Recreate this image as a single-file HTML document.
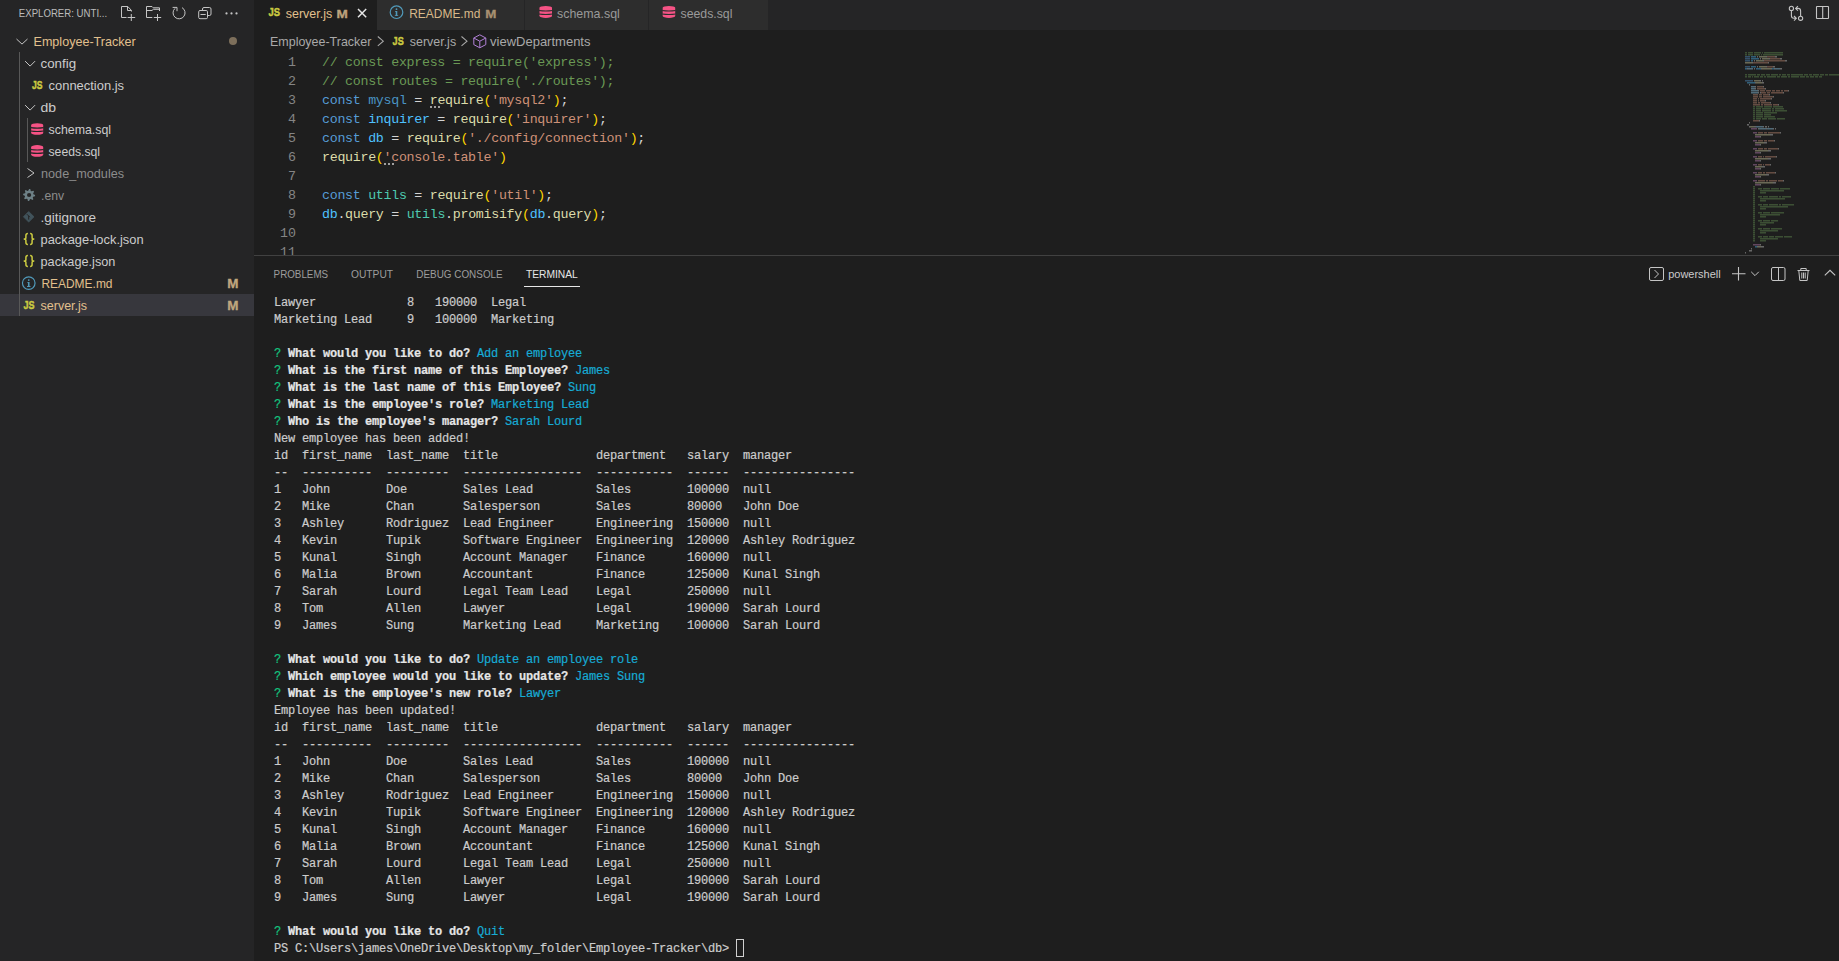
<!DOCTYPE html><html><head><meta charset="utf-8"><title>VS Code</title><style>
*{margin:0;padding:0;box-sizing:border-box}
html,body{width:1839px;height:961px;overflow:hidden;background:#1e1e1e}
body{position:relative;font-family:"Liberation Sans",sans-serif;color:#cccccc}
.abs{position:absolute}
#ov{position:absolute;left:0;top:0}
.code{font-family:"Liberation Mono",monospace;font-size:13.3px;letter-spacing:-0.29px;white-space:pre;line-height:19px;position:absolute}
.ln{width:42px;text-align:right;color:#858585;letter-spacing:0}
.term{position:absolute;left:274px;font-family:"Liberation Mono",monospace;font-size:12px;letter-spacing:-0.2px;line-height:17px;white-space:pre;color:#cccccc;-webkit-text-stroke:0.2px currentColor}
.g{color:#13c47f}.b{font-weight:bold;color:#e5e5e5}.c{color:#17abd4}
.cm{color:#6a9955}.kw{color:#569cd6}.vr{color:#4fc1ff}.fn{color:#dcdcaa}.st{color:#ce9178}.br{color:#ffd700}.pu{color:#d4d4d4}.vg{color:#4ec9b0}.vd{color:#4a94c4}
</style></head><body>
<div class="abs" style="left:0;top:0;width:254px;height:961px;background:#252526"></div>
<div class="abs" style="left:254px;top:0;width:1585px;height:30px;background:#252526"></div>
<div class="abs" style="left:254px;top:0;width:123px;height:30px;background:#1e1e1e"></div>
<div class="abs" style="left:377px;top:0;width:147px;height:30px;background:#2d2d2d"></div>
<div class="abs" style="left:525px;top:0;width:123px;height:30px;background:#2d2d2d"></div>
<div class="abs" style="left:649px;top:0;width:119px;height:30px;background:#2d2d2d"></div>
<div class="abs" style="left:0;top:294px;width:254px;height:22px;background:#37373d"></div>
<div class="abs" style="left:254px;top:255px;width:1585px;height:1px;background:#414141"></div>
<div class="abs" style="left:19px;top:52px;width:1px;height:264px;background:#585858"></div>
<div class="abs" style="left:27px;top:118px;width:1px;height:44px;background:#585858"></div>
<div class="abs" style="left:254px;top:52px;width:1585px;height:203px;overflow:hidden">
<div class="code ln" style="left:0;top:1px">1</div>
<div class="code" style="left:68px;top:1px"><span class="cm">// const express = require(&#x27;express&#x27;);</span></div>
<div class="code ln" style="left:0;top:20px">2</div>
<div class="code" style="left:68px;top:20px"><span class="cm">// const routes = require(&#x27;./routes&#x27;);</span></div>
<div class="code ln" style="left:0;top:39px">3</div>
<div class="code" style="left:68px;top:39px"><span class="kw">const</span><span class="pu"> </span><span class="vd">mysql</span><span class="pu"> = </span><span class="fn">require</span><span class="br">(</span><span class="st">&#x27;mysql2&#x27;</span><span class="br">)</span><span class="pu">;</span></div>
<div class="code ln" style="left:0;top:58px">4</div>
<div class="code" style="left:68px;top:58px"><span class="kw">const</span><span class="pu"> </span><span class="vr">inquirer</span><span class="pu"> = </span><span class="fn">require</span><span class="br">(</span><span class="st">&#x27;inquirer&#x27;</span><span class="br">)</span><span class="pu">;</span></div>
<div class="code ln" style="left:0;top:77px">5</div>
<div class="code" style="left:68px;top:77px"><span class="kw">const</span><span class="pu"> </span><span class="vr">db</span><span class="pu"> = </span><span class="fn">require</span><span class="br">(</span><span class="st">&#x27;./config/connection&#x27;</span><span class="br">)</span><span class="pu">;</span></div>
<div class="code ln" style="left:0;top:96px">6</div>
<div class="code" style="left:68px;top:96px"><span class="fn">require</span><span class="br">(</span><span class="st">&#x27;console.table&#x27;</span><span class="br">)</span></div>
<div class="code ln" style="left:0;top:115px">7</div>
<div class="code" style="left:68px;top:115px"></div>
<div class="code ln" style="left:0;top:134px">8</div>
<div class="code" style="left:68px;top:134px"><span class="kw">const</span><span class="pu"> </span><span class="vg">utils</span><span class="pu"> = </span><span class="fn">require</span><span class="br">(</span><span class="st">&#x27;util&#x27;</span><span class="br">)</span><span class="pu">;</span></div>
<div class="code ln" style="left:0;top:153px">9</div>
<div class="code" style="left:68px;top:153px"><span class="vr">db</span><span class="pu">.</span><span class="fn">query</span><span class="pu"> = </span><span class="vg">utils</span><span class="pu">.</span><span class="fn">promisify</span><span class="br">(</span><span class="vr">db</span><span class="pu">.</span><span class="fn">query</span><span class="br">)</span><span class="pu">;</span></div>
<div class="code ln" style="left:0;top:172px">10</div>
<div class="code" style="left:68px;top:172px"></div>
<div class="code ln" style="left:0;top:191px">11</div>
<div class="code" style="left:68px;top:191px"></div>
</div>
<div class="abs" style="left:524px;top:286px;width:56px;height:1px;background:#e7e7e7"></div>
<div class="term" style="top:295px">Lawyer             8   190000  Legal</div>
<div class="term" style="top:312px">Marketing Lead     9   100000  Marketing</div>
<div class="term" style="top:329px"></div>
<div class="term" style="top:346px"><span class="g">?</span> <span class="b">What would you like to do?</span> <span class="c">Add an employee</span></div>
<div class="term" style="top:363px"><span class="g">?</span> <span class="b">What is the first name of this Employee?</span> <span class="c">James</span></div>
<div class="term" style="top:380px"><span class="g">?</span> <span class="b">What is the last name of this Employee?</span> <span class="c">Sung</span></div>
<div class="term" style="top:397px"><span class="g">?</span> <span class="b">What is the employee&#x27;s role?</span> <span class="c">Marketing Lead</span></div>
<div class="term" style="top:414px"><span class="g">?</span> <span class="b">Who is the employee&#x27;s manager?</span> <span class="c">Sarah Lourd</span></div>
<div class="term" style="top:431px">New employee has been added!</div>
<div class="term" style="top:448px">id  first_name  last_name  title              department   salary  manager</div>
<div class="term" style="top:465px">--  ----------  ---------  -----------------  -----------  ------  ----------------</div>
<div class="term" style="top:482px">1   John        Doe        Sales Lead         Sales        100000  null</div>
<div class="term" style="top:499px">2   Mike        Chan       Salesperson        Sales        80000   John Doe</div>
<div class="term" style="top:516px">3   Ashley      Rodriguez  Lead Engineer      Engineering  150000  null</div>
<div class="term" style="top:533px">4   Kevin       Tupik      Software Engineer  Engineering  120000  Ashley Rodriguez</div>
<div class="term" style="top:550px">5   Kunal       Singh      Account Manager    Finance      160000  null</div>
<div class="term" style="top:567px">6   Malia       Brown      Accountant         Finance      125000  Kunal Singh</div>
<div class="term" style="top:584px">7   Sarah       Lourd      Legal Team Lead    Legal        250000  null</div>
<div class="term" style="top:601px">8   Tom         Allen      Lawyer             Legal        190000  Sarah Lourd</div>
<div class="term" style="top:618px">9   James       Sung       Marketing Lead     Marketing    100000  Sarah Lourd</div>
<div class="term" style="top:635px"></div>
<div class="term" style="top:652px"><span class="g">?</span> <span class="b">What would you like to do?</span> <span class="c">Update an employee role</span></div>
<div class="term" style="top:669px"><span class="g">?</span> <span class="b">Which employee would you like to update?</span> <span class="c">James Sung</span></div>
<div class="term" style="top:686px"><span class="g">?</span> <span class="b">What is the employee&#x27;s new role?</span> <span class="c">Lawyer</span></div>
<div class="term" style="top:703px">Employee has been updated!</div>
<div class="term" style="top:720px">id  first_name  last_name  title              department   salary  manager</div>
<div class="term" style="top:737px">--  ----------  ---------  -----------------  -----------  ------  ----------------</div>
<div class="term" style="top:754px">1   John        Doe        Sales Lead         Sales        100000  null</div>
<div class="term" style="top:771px">2   Mike        Chan       Salesperson        Sales        80000   John Doe</div>
<div class="term" style="top:788px">3   Ashley      Rodriguez  Lead Engineer      Engineering  150000  null</div>
<div class="term" style="top:805px">4   Kevin       Tupik      Software Engineer  Engineering  120000  Ashley Rodriguez</div>
<div class="term" style="top:822px">5   Kunal       Singh      Account Manager    Finance      160000  null</div>
<div class="term" style="top:839px">6   Malia       Brown      Accountant         Finance      125000  Kunal Singh</div>
<div class="term" style="top:856px">7   Sarah       Lourd      Legal Team Lead    Legal        250000  null</div>
<div class="term" style="top:873px">8   Tom         Allen      Lawyer             Legal        190000  Sarah Lourd</div>
<div class="term" style="top:890px">9   James       Sung       Lawyer             Legal        190000  Sarah Lourd</div>
<div class="term" style="top:907px"></div>
<div class="term" style="top:924px"><span class="g">?</span> <span class="b">What would you like to do?</span> <span class="c">Quit</span></div>
<div class="term" style="top:941px">PS C:\Users\james\OneDrive\Desktop\my_folder\Employee-Tracker\db&gt; </div>
<div class="abs" style="left:736px;top:939px;width:8px;height:18px;border:1px solid #d0d0d0"></div>
<svg id="ov" width="1839" height="961" viewBox="0 0 1839 961"><text x="18.80" y="17.3" font-family="Liberation Sans" font-size="11" font-weight="400" fill="#bbbbbb" textLength="88.30" lengthAdjust="spacingAndGlyphs">EXPLORER: UNTI...</text><g fill="none" stroke="#c5c5c5" stroke-width="1"><path d="M131.5 11.5 V10.5 L127.8 6.5 H121.5 V17.5 H126.5 M127.5 6.5 V10.5 H131.5"/><path d="M131.3 14 V21 M127.6 17.5 H135.2"/><path d="M146.5 17.5 V6.5 H152 L153.3 7.8 H159.5 V11 M146.5 10.5 H152 L153.3 9.3 H159.5 M146.5 17.5 H152.3"/><path d="M157.5 14 V21 M153.8 17.5 H161.2"/><path d="M182 7.6 A6 6 0 1 1 175 8.4"/><path d="M172.6 7.4 H177 V11.2"/><path d="M202.5 10 V9 Q202.5 7.5 204 7.5 H209.5 Q211 7.5 211 9 V14 Q211 15.5 209.5 15.5 H208"/><rect x="198.7" y="10.5" width="8.8" height="8.2" rx="1.3"/><path d="M200.5 14.5 H205.7"/></g><circle cx="226.5" cy="13.4" r="1.1" fill="#c5c5c5"/><circle cx="231.5" cy="13.4" r="1.1" fill="#c5c5c5"/><circle cx="236.5" cy="13.4" r="1.1" fill="#c5c5c5"/><text x="33.50" y="46" font-family="Liberation Sans" font-size="12.6" font-weight="400" fill="#e2c08d" textLength="102.30" lengthAdjust="spacingAndGlyphs">Employee-Tracker</text><text x="40.50" y="68" font-family="Liberation Sans" font-size="12.6" font-weight="400" fill="#cccccc" textLength="35.60" lengthAdjust="spacingAndGlyphs">config</text><text x="48.50" y="90" font-family="Liberation Sans" font-size="12.6" font-weight="400" fill="#cccccc" textLength="75.60" lengthAdjust="spacingAndGlyphs">connection.js</text><text x="40.50" y="112" font-family="Liberation Sans" font-size="12.6" font-weight="400" fill="#cccccc" textLength="15.60" lengthAdjust="spacingAndGlyphs">db</text><text x="48.50" y="134" font-family="Liberation Sans" font-size="12.6" font-weight="400" fill="#cccccc" textLength="62.60" lengthAdjust="spacingAndGlyphs">schema.sql</text><text x="48.50" y="156" font-family="Liberation Sans" font-size="12.6" font-weight="400" fill="#cccccc" textLength="51.60" lengthAdjust="spacingAndGlyphs">seeds.sql</text><text x="41.00" y="178" font-family="Liberation Sans" font-size="12.6" font-weight="400" fill="#8c8c8c" textLength="83.10" lengthAdjust="spacingAndGlyphs">node_modules</text><text x="41.00" y="200" font-family="Liberation Sans" font-size="12.6" font-weight="400" fill="#8c8c8c" textLength="23.10" lengthAdjust="spacingAndGlyphs">.env</text><text x="40.50" y="222" font-family="Liberation Sans" font-size="12.6" font-weight="400" fill="#cccccc" textLength="55.60" lengthAdjust="spacingAndGlyphs">.gitignore</text><text x="40.50" y="244" font-family="Liberation Sans" font-size="12.6" font-weight="400" fill="#cccccc" textLength="103.10" lengthAdjust="spacingAndGlyphs">package-lock.json</text><text x="40.50" y="266" font-family="Liberation Sans" font-size="12.6" font-weight="400" fill="#cccccc" textLength="74.90" lengthAdjust="spacingAndGlyphs">package.json</text><text x="41.40" y="288" font-family="Liberation Sans" font-size="12.6" font-weight="400" fill="#e2c08d" textLength="71.10" lengthAdjust="spacingAndGlyphs">README.md</text><text x="40.50" y="310" font-family="Liberation Sans" font-size="12.6" font-weight="400" fill="#e2c08d" textLength="46.60" lengthAdjust="spacingAndGlyphs">server.js</text><text x="227.20" y="288" font-family="Liberation Sans" font-size="12" font-weight="700" fill="#c0a67e" stroke="#c0a67e" stroke-width="0.3" textLength="11.20" lengthAdjust="spacingAndGlyphs">M</text><text x="227.20" y="310" font-family="Liberation Sans" font-size="12" font-weight="700" fill="#c0a67e" stroke="#c0a67e" stroke-width="0.3" textLength="11.20" lengthAdjust="spacingAndGlyphs">M</text><path d="M16.5 39.0 L22.0 44.1 L27.5 39.0" fill="none" stroke="#c5c5c5" stroke-width="1.0"/><path d="M25.1 61.1 L30.1 66.1 L35.1 61.1" fill="none" stroke="#c5c5c5" stroke-width="1.0"/><path d="M25.1 105.1 L30.1 110.1 L35.1 105.1" fill="none" stroke="#c5c5c5" stroke-width="1.0"/><text x="32" y="89" font-family="Liberation Sans" font-size="10.64" font-weight="700" fill="#cbcb41" stroke="#cbcb41" stroke-width="0.45" textLength="10.50" lengthAdjust="spacingAndGlyphs">JS</text><g fill="#f55385"><rect x="31.2" y="125.056" width="12" height="7.888"/><ellipse cx="37.2" cy="125.056" rx="6.0" ry="1.8559999999999999"/><ellipse cx="37.2" cy="132.94400000000002" rx="6.0" ry="1.8559999999999999"/></g><path d="M30.7 127.608 Q37.2 128.608 43.7 127.608 M30.7 130.972 Q37.2 131.972 43.7 130.972" fill="none" stroke="#252526" stroke-width="1.1"/><g fill="#f55385"><rect x="31.2" y="146.956" width="12" height="7.888"/><ellipse cx="37.2" cy="146.956" rx="6.0" ry="1.8559999999999999"/><ellipse cx="37.2" cy="154.844" rx="6.0" ry="1.8559999999999999"/></g><path d="M30.7 149.50799999999998 Q37.2 150.50799999999998 43.7 149.50799999999998 M30.7 152.87199999999999 Q37.2 153.87199999999999 43.7 152.87199999999999" fill="none" stroke="#252526" stroke-width="1.1"/><path d="M27.5 168.5 L34 173.0 L27.5 177.5" fill="none" stroke="#c5c5c5" stroke-width="1.0"/><polygon points="29.10,189.00 30.27,189.12 30.78,190.93 31.54,191.34 33.34,190.76 34.09,191.67 33.17,193.32 33.42,194.14 35.10,195.00 34.98,196.17 33.17,196.68 32.76,197.44 33.34,199.24 32.43,199.99 30.78,199.07 29.96,199.32 29.10,201.00 27.93,200.88 27.42,199.07 26.66,198.66 24.86,199.24 24.11,198.33 25.03,196.68 24.78,195.86 23.10,195.00 23.22,193.83 25.03,193.32 25.44,192.56 24.86,190.76 25.77,190.01 27.42,190.93 28.24,190.68" fill="#6d8086"/><circle cx="29.1" cy="195" r="2.1" fill="#252526"/><path d="M28.7 211.5 L34.0 216.8 L28.7 222.10000000000002 L23.4 216.8 Z" fill="#41535b" stroke="#41535b" stroke-width="0.8" stroke-linejoin="round"/><path d="M26.9 214.20000000000002 L29.9 217.20000000000002 M28.7 215.9 V219.60000000000002" stroke="#252526" stroke-width="1"/><path d="M27.9 233.5 Q25.9 233.5 25.9 235.5 V237.7 Q25.9 239.0 23.7 239.0 Q25.9 239.0 25.9 240.3 V242.5 Q25.9 244.5 27.9 244.5 M30.099999999999998 233.5 Q32.099999999999994 233.5 32.099999999999994 235.5 V237.7 Q32.099999999999994 239.0 34.3 239.0 Q32.099999999999994 239.0 32.099999999999994 240.3 V242.5 Q32.099999999999994 244.5 30.099999999999998 244.5" fill="none" stroke="#cbcb41" stroke-width="1.5"/><path d="M27.9 255.5 Q25.9 255.5 25.9 257.5 V259.7 Q25.9 261.0 23.7 261.0 Q25.9 261.0 25.9 262.3 V264.5 Q25.9 266.5 27.9 266.5 M30.099999999999998 255.5 Q32.099999999999994 255.5 32.099999999999994 257.5 V259.7 Q32.099999999999994 261.0 34.3 261.0 Q32.099999999999994 261.0 32.099999999999994 262.3 V264.5 Q32.099999999999994 266.5 30.099999999999998 266.5" fill="none" stroke="#cbcb41" stroke-width="1.5"/><circle cx="28.75" cy="283.1" r="6.3" fill="none" stroke="#519aba" stroke-width="1.2"/><circle cx="28.75" cy="280.1" r="0.9" fill="#519aba"/><path d="M27.25 281.90000000000003 H29.55 V286.1 H30.45 V287.0 H27.05 V286.1 H27.95 V282.70000000000005 H27.25Z" fill="#519aba"/><text x="23.6" y="309.1" font-family="Liberation Sans" font-size="10.77" font-weight="700" fill="#cbcb41" stroke="#cbcb41" stroke-width="0.45" textLength="11.00" lengthAdjust="spacingAndGlyphs">JS</text><circle cx="233" cy="41" r="4" fill="#7d6f5b"/><text x="268.5" y="16.3" font-family="Liberation Sans" font-size="11.04" font-weight="700" fill="#cbcb41" stroke="#cbcb41" stroke-width="0.45" textLength="11.50" lengthAdjust="spacingAndGlyphs">JS</text><text x="285.70" y="17.7" font-family="Liberation Sans" font-size="12.6" font-weight="400" fill="#e2c08d" textLength="46.50" lengthAdjust="spacingAndGlyphs">server.js</text><text x="336.50" y="17.7" font-family="Liberation Sans" font-size="11.5" font-weight="700" fill="#bca27c" stroke="#bca27c" stroke-width="0.35" textLength="11.30" lengthAdjust="spacingAndGlyphs">M</text><path d="M358 9 L366.2 17.2 M366.2 9 L358 17.2" stroke="#e6e6e6" stroke-width="1.5"/><circle cx="396.5" cy="12.2" r="6.3" fill="none" stroke="#519aba" stroke-width="1.2"/><circle cx="396.5" cy="9.2" r="0.9" fill="#519aba"/><path d="M395.0 11.0 H397.3 V15.2 H398.2 V16.099999999999998 H394.8 V15.2 H395.7 V11.799999999999999 H395.0Z" fill="#519aba"/><text x="409.20" y="17.9" font-family="Liberation Sans" font-size="12.6" font-weight="400" fill="#d8b98a" textLength="71.10" lengthAdjust="spacingAndGlyphs">README.md</text><text x="485.20" y="17.9" font-family="Liberation Sans" font-size="11.5" font-weight="700" fill="#a89070" stroke="#a89070" stroke-width="0.35" textLength="11.10" lengthAdjust="spacingAndGlyphs">M</text><g fill="#f55385"><rect x="539.5" y="7.82" width="12.5" height="8.16"/><ellipse cx="545.75" cy="7.82" rx="6.25" ry="1.92"/><ellipse cx="545.75" cy="15.979999999999999" rx="6.25" ry="1.92"/></g><path d="M539.0 10.46 Q545.75 11.46 552.5 10.46 M539.0 13.940000000000001 Q545.75 14.940000000000001 552.5 13.940000000000001" fill="none" stroke="#2d2d2d" stroke-width="1.1"/><text x="557.00" y="17.9" font-family="Liberation Sans" font-size="12.6" font-weight="400" fill="#9a9a9a" textLength="62.80" lengthAdjust="spacingAndGlyphs">schema.sql</text><g fill="#f55385"><rect x="662.7" y="7.82" width="12.5" height="8.16"/><ellipse cx="668.95" cy="7.82" rx="6.25" ry="1.92"/><ellipse cx="668.95" cy="15.979999999999999" rx="6.25" ry="1.92"/></g><path d="M662.2 10.46 Q668.95 11.46 675.7 10.46 M662.2 13.940000000000001 Q668.95 14.940000000000001 675.7 13.940000000000001" fill="none" stroke="#2d2d2d" stroke-width="1.1"/><text x="680.50" y="17.9" font-family="Liberation Sans" font-size="12.6" font-weight="400" fill="#9a9a9a" textLength="51.90" lengthAdjust="spacingAndGlyphs">seeds.sql</text><g fill="none" stroke="#c5c5c5" stroke-width="1.1"><circle cx="1791.4" cy="8.4" r="2.1"/><circle cx="1800.6" cy="18.3" r="2.1"/><path d="M1791.4 10.5 V15.8 Q1791.4 18.3 1793.9 18.3 H1796.6 M1794 16 L1796.3 18.3 L1794 20.6"/><path d="M1800.6 16.2 V10.9 Q1800.6 8.4 1798.1 8.4 H1795.4 M1797.9 6.1 L1795.6 8.4 L1797.9 10.7"/><rect x="1816.5" y="6.5" width="12" height="12" rx="0.5"/><path d="M1822.7 6.5 V18.5"/></g><text x="270.00" y="46" font-family="Liberation Sans" font-size="12.6" font-weight="400" fill="#a9a9a9" textLength="101.40" lengthAdjust="spacingAndGlyphs">Employee-Tracker</text><path d="M377.8 36.5 L383.3 41.15 L377.8 45.8" fill="none" stroke="#a9a9a9" stroke-width="1.05"/><text x="392.6" y="45" font-family="Liberation Sans" font-size="10.37" font-weight="700" fill="#cbcb41" stroke="#cbcb41" stroke-width="0.45" textLength="11.10" lengthAdjust="spacingAndGlyphs">JS</text><text x="409.80" y="46" font-family="Liberation Sans" font-size="12.6" font-weight="400" fill="#a9a9a9" textLength="46.30" lengthAdjust="spacingAndGlyphs">server.js</text><path d="M461.5 36.5 L467 41.15 L461.5 45.8" fill="none" stroke="#a9a9a9" stroke-width="1.05"/><path d="M479.8 34.8 L485.8 38 V44.6 L479.8 47.8 L473.8 44.6 V38 Z M473.8 38 L479.8 41.2 L485.8 38 M479.8 41.2 V47.8" fill="none" stroke="#b180d7" stroke-width="1" stroke-linejoin="round"/><text x="490.00" y="46" font-family="Liberation Sans" font-size="12.6" font-weight="400" fill="#a9a9a9" textLength="100.50" lengthAdjust="spacingAndGlyphs">viewDepartments</text><g fill="#a0a0a0"><rect x="430" y="106" width="2" height="2"/><rect x="434" y="106" width="2" height="2"/><rect x="438" y="106" width="2" height="2"/><rect x="384" y="163" width="2" height="2"/><rect x="388" y="163" width="2" height="2"/><rect x="392" y="163" width="2" height="2"/></g><text x="273.60" y="277.9" font-family="Liberation Sans" font-size="11" font-weight="400" fill="#9d9d9d" textLength="54.50" lengthAdjust="spacingAndGlyphs">PROBLEMS</text><text x="351.00" y="277.9" font-family="Liberation Sans" font-size="11" font-weight="400" fill="#9d9d9d" textLength="42.10" lengthAdjust="spacingAndGlyphs">OUTPUT</text><text x="416.30" y="277.9" font-family="Liberation Sans" font-size="11" font-weight="400" fill="#9d9d9d" textLength="86.40" lengthAdjust="spacingAndGlyphs">DEBUG CONSOLE</text><text x="525.90" y="277.9" font-family="Liberation Sans" font-size="11" font-weight="400" fill="#e7e7e7" textLength="51.90" lengthAdjust="spacingAndGlyphs">TERMINAL</text><g fill="none" stroke="#c5c5c5" stroke-width="1"><rect x="1649.5" y="267.5" width="14" height="13" rx="1.5"/><path d="M1654.5 270 L1658.5 274 L1654.5 278"/><path d="M1738.5 267 V280.5 M1732 273.8 H1745.5" stroke-width="1.1"/><path d="M1751.2 271.8 L1755 275.6 L1758.8 271.8"/><rect x="1771.5" y="267.5" width="13.5" height="13" rx="1.5"/><path d="M1778.5 267.5 V280.5"/><path d="M1797.5 270.5 H1809.5 M1800.8 270.5 V268.5 H1806.2 V270.5 M1798.8 270.5 L1799.8 280.5 H1807.2 L1808.2 270.5 M1801.8 272.5 V278.5 M1803.5 272.5 V278.5 M1805.2 272.5 V278.5"/><path d="M1824.8 275.3 L1830 270.3 L1835.2 275.3" stroke-width="1.1"/></g><text x="1668.20" y="277.5" font-family="Liberation Sans" font-size="11.5" font-weight="400" fill="#cccccc" textLength="52.50" lengthAdjust="spacingAndGlyphs">powershell</text><g opacity="0.4"><rect x="1745" y="52" width="2" height="1" fill="#6a9955"/><rect x="1745" y="53" width="2" height="1" fill="#6a9955" opacity="0.55"/><rect x="1748" y="52" width="5" height="1" fill="#6a9955"/><rect x="1748" y="53" width="5" height="1" fill="#6a9955" opacity="0.55"/><rect x="1754" y="52" width="7" height="1" fill="#6a9955"/><rect x="1754" y="53" width="7" height="1" fill="#6a9955" opacity="0.55"/><rect x="1762" y="52" width="1" height="1" fill="#6a9955"/><rect x="1762" y="53" width="1" height="1" fill="#6a9955" opacity="0.55"/><rect x="1764" y="52" width="19" height="1" fill="#6a9955"/><rect x="1764" y="53" width="19" height="1" fill="#6a9955" opacity="0.55"/><rect x="1745" y="54" width="2" height="1" fill="#6a9955"/><rect x="1745" y="55" width="2" height="1" fill="#6a9955" opacity="0.55"/><rect x="1748" y="54" width="5" height="1" fill="#6a9955"/><rect x="1748" y="55" width="5" height="1" fill="#6a9955" opacity="0.55"/><rect x="1754" y="54" width="6" height="1" fill="#6a9955"/><rect x="1754" y="55" width="6" height="1" fill="#6a9955" opacity="0.55"/><rect x="1761" y="54" width="1" height="1" fill="#6a9955"/><rect x="1761" y="55" width="1" height="1" fill="#6a9955" opacity="0.55"/><rect x="1763" y="54" width="20" height="1" fill="#6a9955"/><rect x="1763" y="55" width="20" height="1" fill="#6a9955" opacity="0.55"/><rect x="1745" y="56" width="5" height="1" fill="#569cd6"/><rect x="1745" y="57" width="5" height="1" fill="#569cd6" opacity="0.55"/><rect x="1751" y="56" width="5" height="1" fill="#4fc1ff"/><rect x="1751" y="57" width="5" height="1" fill="#4fc1ff" opacity="0.55"/><rect x="1757" y="56" width="1" height="1" fill="#d4d4d4"/><rect x="1757" y="57" width="1" height="1" fill="#d4d4d4" opacity="0.55"/><rect x="1759" y="56" width="7" height="1" fill="#dcdcaa"/><rect x="1759" y="57" width="7" height="1" fill="#dcdcaa" opacity="0.55"/><rect x="1766" y="56" width="1" height="1" fill="#d4d4d4"/><rect x="1766" y="57" width="1" height="1" fill="#d4d4d4" opacity="0.55"/><rect x="1767" y="56" width="8" height="1" fill="#ce9178"/><rect x="1767" y="57" width="8" height="1" fill="#ce9178" opacity="0.55"/><rect x="1775" y="56" width="1" height="1" fill="#d4d4d4"/><rect x="1775" y="57" width="1" height="1" fill="#d4d4d4" opacity="0.55"/><rect x="1776" y="56" width="1" height="1" fill="#d4d4d4"/><rect x="1776" y="57" width="1" height="1" fill="#d4d4d4" opacity="0.55"/><rect x="1745" y="58" width="5" height="1" fill="#569cd6"/><rect x="1745" y="59" width="5" height="1" fill="#569cd6" opacity="0.55"/><rect x="1751" y="58" width="8" height="1" fill="#4fc1ff"/><rect x="1751" y="59" width="8" height="1" fill="#4fc1ff" opacity="0.55"/><rect x="1760" y="58" width="1" height="1" fill="#d4d4d4"/><rect x="1760" y="59" width="1" height="1" fill="#d4d4d4" opacity="0.55"/><rect x="1762" y="58" width="7" height="1" fill="#dcdcaa"/><rect x="1762" y="59" width="7" height="1" fill="#dcdcaa" opacity="0.55"/><rect x="1769" y="58" width="1" height="1" fill="#d4d4d4"/><rect x="1769" y="59" width="1" height="1" fill="#d4d4d4" opacity="0.55"/><rect x="1770" y="58" width="10" height="1" fill="#ce9178"/><rect x="1770" y="59" width="10" height="1" fill="#ce9178" opacity="0.55"/><rect x="1780" y="58" width="1" height="1" fill="#d4d4d4"/><rect x="1780" y="59" width="1" height="1" fill="#d4d4d4" opacity="0.55"/><rect x="1781" y="58" width="1" height="1" fill="#d4d4d4"/><rect x="1781" y="59" width="1" height="1" fill="#d4d4d4" opacity="0.55"/><rect x="1745" y="60" width="5" height="1" fill="#569cd6"/><rect x="1745" y="61" width="5" height="1" fill="#569cd6" opacity="0.55"/><rect x="1751" y="60" width="2" height="1" fill="#4fc1ff"/><rect x="1751" y="61" width="2" height="1" fill="#4fc1ff" opacity="0.55"/><rect x="1754" y="60" width="1" height="1" fill="#d4d4d4"/><rect x="1754" y="61" width="1" height="1" fill="#d4d4d4" opacity="0.55"/><rect x="1756" y="60" width="7" height="1" fill="#dcdcaa"/><rect x="1756" y="61" width="7" height="1" fill="#dcdcaa" opacity="0.55"/><rect x="1763" y="60" width="1" height="1" fill="#d4d4d4"/><rect x="1763" y="61" width="1" height="1" fill="#d4d4d4" opacity="0.55"/><rect x="1764" y="60" width="21" height="1" fill="#ce9178"/><rect x="1764" y="61" width="21" height="1" fill="#ce9178" opacity="0.55"/><rect x="1785" y="60" width="1" height="1" fill="#d4d4d4"/><rect x="1785" y="61" width="1" height="1" fill="#d4d4d4" opacity="0.55"/><rect x="1786" y="60" width="1" height="1" fill="#d4d4d4"/><rect x="1786" y="61" width="1" height="1" fill="#d4d4d4" opacity="0.55"/><rect x="1745" y="62" width="7" height="1" fill="#dcdcaa"/><rect x="1745" y="63" width="7" height="1" fill="#dcdcaa" opacity="0.55"/><rect x="1752" y="62" width="1" height="1" fill="#d4d4d4"/><rect x="1752" y="63" width="1" height="1" fill="#d4d4d4" opacity="0.55"/><rect x="1753" y="62" width="15" height="1" fill="#ce9178"/><rect x="1753" y="63" width="15" height="1" fill="#ce9178" opacity="0.55"/><rect x="1768" y="62" width="1" height="1" fill="#d4d4d4"/><rect x="1768" y="63" width="1" height="1" fill="#d4d4d4" opacity="0.55"/><rect x="1745" y="66" width="5" height="1" fill="#569cd6"/><rect x="1745" y="67" width="5" height="1" fill="#569cd6" opacity="0.55"/><rect x="1751" y="66" width="5" height="1" fill="#4fc1ff"/><rect x="1751" y="67" width="5" height="1" fill="#4fc1ff" opacity="0.55"/><rect x="1757" y="66" width="1" height="1" fill="#d4d4d4"/><rect x="1757" y="67" width="1" height="1" fill="#d4d4d4" opacity="0.55"/><rect x="1759" y="66" width="7" height="1" fill="#dcdcaa"/><rect x="1759" y="67" width="7" height="1" fill="#dcdcaa" opacity="0.55"/><rect x="1766" y="66" width="1" height="1" fill="#d4d4d4"/><rect x="1766" y="67" width="1" height="1" fill="#d4d4d4" opacity="0.55"/><rect x="1767" y="66" width="6" height="1" fill="#ce9178"/><rect x="1767" y="67" width="6" height="1" fill="#ce9178" opacity="0.55"/><rect x="1773" y="66" width="1" height="1" fill="#d4d4d4"/><rect x="1773" y="67" width="1" height="1" fill="#d4d4d4" opacity="0.55"/><rect x="1774" y="66" width="1" height="1" fill="#d4d4d4"/><rect x="1774" y="67" width="1" height="1" fill="#d4d4d4" opacity="0.55"/><rect x="1745" y="68" width="2" height="1" fill="#4fc1ff"/><rect x="1745" y="69" width="2" height="1" fill="#4fc1ff" opacity="0.55"/><rect x="1747" y="68" width="1" height="1" fill="#d4d4d4"/><rect x="1747" y="69" width="1" height="1" fill="#d4d4d4" opacity="0.55"/><rect x="1748" y="68" width="5" height="1" fill="#9cdcfe"/><rect x="1748" y="69" width="5" height="1" fill="#9cdcfe" opacity="0.55"/><rect x="1754" y="68" width="1" height="1" fill="#d4d4d4"/><rect x="1754" y="69" width="1" height="1" fill="#d4d4d4" opacity="0.55"/><rect x="1756" y="68" width="5" height="1" fill="#4fc1ff"/><rect x="1756" y="69" width="5" height="1" fill="#4fc1ff" opacity="0.55"/><rect x="1761" y="68" width="1" height="1" fill="#d4d4d4"/><rect x="1761" y="69" width="1" height="1" fill="#d4d4d4" opacity="0.55"/><rect x="1762" y="68" width="9" height="1" fill="#dcdcaa"/><rect x="1762" y="69" width="9" height="1" fill="#dcdcaa" opacity="0.55"/><rect x="1771" y="68" width="1" height="1" fill="#d4d4d4"/><rect x="1771" y="69" width="1" height="1" fill="#d4d4d4" opacity="0.55"/><rect x="1772" y="68" width="2" height="1" fill="#4fc1ff"/><rect x="1772" y="69" width="2" height="1" fill="#4fc1ff" opacity="0.55"/><rect x="1774" y="68" width="1" height="1" fill="#d4d4d4"/><rect x="1774" y="69" width="1" height="1" fill="#d4d4d4" opacity="0.55"/><rect x="1775" y="68" width="5" height="1" fill="#9cdcfe"/><rect x="1775" y="69" width="5" height="1" fill="#9cdcfe" opacity="0.55"/><rect x="1780" y="68" width="1" height="1" fill="#d4d4d4"/><rect x="1780" y="69" width="1" height="1" fill="#d4d4d4" opacity="0.55"/><rect x="1781" y="68" width="1" height="1" fill="#d4d4d4"/><rect x="1781" y="69" width="1" height="1" fill="#d4d4d4" opacity="0.55"/><rect x="1745" y="74" width="2" height="1" fill="#6a9955"/><rect x="1745" y="75" width="2" height="1" fill="#6a9955" opacity="0.55"/><rect x="1748" y="74" width="8" height="1" fill="#6a9955"/><rect x="1748" y="75" width="8" height="1" fill="#6a9955" opacity="0.55"/><rect x="1757" y="74" width="3" height="1" fill="#6a9955"/><rect x="1757" y="75" width="3" height="1" fill="#6a9955" opacity="0.55"/><rect x="1761" y="74" width="4" height="1" fill="#6a9955"/><rect x="1761" y="75" width="4" height="1" fill="#6a9955" opacity="0.55"/><rect x="1766" y="74" width="4" height="1" fill="#6a9955"/><rect x="1766" y="75" width="4" height="1" fill="#6a9955" opacity="0.55"/><rect x="1771" y="74" width="7" height="1" fill="#6a9955"/><rect x="1771" y="75" width="7" height="1" fill="#6a9955" opacity="0.55"/><rect x="1779" y="74" width="2" height="1" fill="#6a9955"/><rect x="1779" y="75" width="2" height="1" fill="#6a9955" opacity="0.55"/><rect x="1782" y="74" width="4" height="1" fill="#6a9955"/><rect x="1782" y="75" width="4" height="1" fill="#6a9955" opacity="0.55"/><rect x="1787" y="74" width="3" height="1" fill="#6a9955"/><rect x="1787" y="75" width="3" height="1" fill="#6a9955" opacity="0.55"/><rect x="1791" y="74" width="12" height="1" fill="#6a9955"/><rect x="1791" y="75" width="12" height="1" fill="#6a9955" opacity="0.55"/><rect x="1804" y="74" width="4" height="1" fill="#6a9955"/><rect x="1804" y="75" width="4" height="1" fill="#6a9955" opacity="0.55"/><rect x="1809" y="74" width="3" height="1" fill="#6a9955"/><rect x="1809" y="75" width="3" height="1" fill="#6a9955" opacity="0.55"/><rect x="1813" y="74" width="6" height="1" fill="#6a9955"/><rect x="1813" y="75" width="6" height="1" fill="#6a9955" opacity="0.55"/><rect x="1820" y="74" width="4" height="1" fill="#6a9955"/><rect x="1820" y="75" width="4" height="1" fill="#6a9955" opacity="0.55"/><rect x="1825" y="74" width="3" height="1" fill="#6a9955"/><rect x="1825" y="75" width="3" height="1" fill="#6a9955" opacity="0.55"/><rect x="1829" y="74" width="10" height="1" fill="#6a9955"/><rect x="1829" y="75" width="10" height="1" fill="#6a9955" opacity="0.55"/><rect x="1745" y="76" width="2" height="1" fill="#6a9955"/><rect x="1745" y="77" width="2" height="1" fill="#6a9955" opacity="0.55"/><rect x="1748" y="76" width="3" height="1" fill="#6a9955"/><rect x="1748" y="77" width="3" height="1" fill="#6a9955" opacity="0.55"/><rect x="1752" y="76" width="1" height="1" fill="#6a9955"/><rect x="1752" y="77" width="1" height="1" fill="#6a9955" opacity="0.55"/><rect x="1754" y="76" width="5" height="1" fill="#6a9955"/><rect x="1754" y="77" width="5" height="1" fill="#6a9955" opacity="0.55"/><rect x="1760" y="76" width="3" height="1" fill="#6a9955"/><rect x="1760" y="77" width="3" height="1" fill="#6a9955" opacity="0.55"/><rect x="1764" y="76" width="2" height="1" fill="#6a9955"/><rect x="1764" y="77" width="2" height="1" fill="#6a9955" opacity="0.55"/><rect x="1767" y="76" width="9" height="1" fill="#6a9955"/><rect x="1767" y="77" width="9" height="1" fill="#6a9955" opacity="0.55"/><rect x="1777" y="76" width="3" height="1" fill="#6a9955"/><rect x="1777" y="77" width="3" height="1" fill="#6a9955" opacity="0.55"/><rect x="1781" y="76" width="6" height="1" fill="#6a9955"/><rect x="1781" y="77" width="6" height="1" fill="#6a9955" opacity="0.55"/><rect x="1788" y="76" width="2" height="1" fill="#6a9955"/><rect x="1788" y="77" width="2" height="1" fill="#6a9955" opacity="0.55"/><rect x="1791" y="76" width="8" height="1" fill="#6a9955"/><rect x="1791" y="77" width="8" height="1" fill="#6a9955" opacity="0.55"/><rect x="1800" y="76" width="5" height="1" fill="#6a9955"/><rect x="1800" y="77" width="5" height="1" fill="#6a9955" opacity="0.55"/><rect x="1806" y="76" width="3" height="1" fill="#6a9955"/><rect x="1806" y="77" width="3" height="1" fill="#6a9955" opacity="0.55"/><rect x="1810" y="76" width="4" height="1" fill="#6a9955"/><rect x="1810" y="77" width="4" height="1" fill="#6a9955" opacity="0.55"/><rect x="1815" y="76" width="3" height="1" fill="#6a9955"/><rect x="1815" y="77" width="3" height="1" fill="#6a9955" opacity="0.55"/><rect x="1819" y="76" width="3" height="1" fill="#6a9955"/><rect x="1819" y="77" width="3" height="1" fill="#6a9955" opacity="0.55"/><rect x="1745" y="80" width="8" height="1" fill="#569cd6"/><rect x="1745" y="81" width="8" height="1" fill="#569cd6" opacity="0.55"/><rect x="1754" y="80" width="5" height="1" fill="#dcdcaa"/><rect x="1754" y="81" width="5" height="1" fill="#dcdcaa" opacity="0.55"/><rect x="1759" y="80" width="1" height="1" fill="#d4d4d4"/><rect x="1759" y="81" width="1" height="1" fill="#d4d4d4" opacity="0.55"/><rect x="1760" y="80" width="1" height="1" fill="#d4d4d4"/><rect x="1760" y="81" width="1" height="1" fill="#d4d4d4" opacity="0.55"/><rect x="1762" y="80" width="1" height="1" fill="#d4d4d4"/><rect x="1762" y="81" width="1" height="1" fill="#d4d4d4" opacity="0.55"/><rect x="1747" y="82" width="8" height="1" fill="#4fc1ff"/><rect x="1747" y="83" width="8" height="1" fill="#4fc1ff" opacity="0.55"/><rect x="1755" y="82" width="1" height="1" fill="#d4d4d4"/><rect x="1755" y="83" width="1" height="1" fill="#d4d4d4" opacity="0.55"/><rect x="1756" y="82" width="6" height="1" fill="#dcdcaa"/><rect x="1756" y="83" width="6" height="1" fill="#dcdcaa" opacity="0.55"/><rect x="1762" y="82" width="1" height="1" fill="#d4d4d4"/><rect x="1762" y="83" width="1" height="1" fill="#d4d4d4" opacity="0.55"/><rect x="1763" y="82" width="1" height="1" fill="#d4d4d4"/><rect x="1763" y="83" width="1" height="1" fill="#d4d4d4" opacity="0.55"/><rect x="1749" y="84" width="1" height="1" fill="#d4d4d4"/><rect x="1749" y="85" width="1" height="1" fill="#d4d4d4" opacity="0.55"/><rect x="1751" y="86" width="4" height="1" fill="#9cdcfe"/><rect x="1751" y="87" width="4" height="1" fill="#9cdcfe" opacity="0.55"/><rect x="1755" y="86" width="1" height="1" fill="#d4d4d4"/><rect x="1755" y="87" width="1" height="1" fill="#d4d4d4" opacity="0.55"/><rect x="1757" y="86" width="6" height="1" fill="#ce9178"/><rect x="1757" y="87" width="6" height="1" fill="#ce9178" opacity="0.55"/><rect x="1763" y="86" width="1" height="1" fill="#d4d4d4"/><rect x="1763" y="87" width="1" height="1" fill="#d4d4d4" opacity="0.55"/><rect x="1751" y="88" width="4" height="1" fill="#9cdcfe"/><rect x="1751" y="89" width="4" height="1" fill="#9cdcfe" opacity="0.55"/><rect x="1755" y="88" width="1" height="1" fill="#d4d4d4"/><rect x="1755" y="89" width="1" height="1" fill="#d4d4d4" opacity="0.55"/><rect x="1757" y="88" width="8" height="1" fill="#ce9178"/><rect x="1757" y="89" width="8" height="1" fill="#ce9178" opacity="0.55"/><rect x="1765" y="88" width="1" height="1" fill="#d4d4d4"/><rect x="1765" y="89" width="1" height="1" fill="#d4d4d4" opacity="0.55"/><rect x="1751" y="90" width="7" height="1" fill="#9cdcfe"/><rect x="1751" y="91" width="7" height="1" fill="#9cdcfe" opacity="0.55"/><rect x="1758" y="90" width="1" height="1" fill="#d4d4d4"/><rect x="1758" y="91" width="1" height="1" fill="#d4d4d4" opacity="0.55"/><rect x="1760" y="90" width="5" height="1" fill="#ce9178"/><rect x="1760" y="91" width="5" height="1" fill="#ce9178" opacity="0.55"/><rect x="1766" y="90" width="5" height="1" fill="#ce9178"/><rect x="1766" y="91" width="5" height="1" fill="#ce9178" opacity="0.55"/><rect x="1772" y="90" width="3" height="1" fill="#ce9178"/><rect x="1772" y="91" width="3" height="1" fill="#ce9178" opacity="0.55"/><rect x="1776" y="90" width="4" height="1" fill="#ce9178"/><rect x="1776" y="91" width="4" height="1" fill="#ce9178" opacity="0.55"/><rect x="1781" y="90" width="2" height="1" fill="#ce9178"/><rect x="1781" y="91" width="2" height="1" fill="#ce9178" opacity="0.55"/><rect x="1784" y="90" width="4" height="1" fill="#ce9178"/><rect x="1784" y="91" width="4" height="1" fill="#ce9178" opacity="0.55"/><rect x="1788" y="90" width="1" height="1" fill="#d4d4d4"/><rect x="1788" y="91" width="1" height="1" fill="#d4d4d4" opacity="0.55"/><rect x="1751" y="92" width="7" height="1" fill="#9cdcfe"/><rect x="1751" y="93" width="7" height="1" fill="#9cdcfe" opacity="0.55"/><rect x="1758" y="92" width="1" height="1" fill="#d4d4d4"/><rect x="1758" y="93" width="1" height="1" fill="#d4d4d4" opacity="0.55"/><rect x="1760" y="92" width="1" height="1" fill="#d4d4d4"/><rect x="1760" y="93" width="1" height="1" fill="#d4d4d4" opacity="0.55"/><rect x="1761" y="92" width="5" height="1" fill="#ce9178"/><rect x="1761" y="93" width="5" height="1" fill="#ce9178" opacity="0.55"/><rect x="1767" y="92" width="3" height="1" fill="#ce9178"/><rect x="1767" y="93" width="3" height="1" fill="#ce9178" opacity="0.55"/><rect x="1771" y="92" width="12" height="1" fill="#ce9178"/><rect x="1771" y="93" width="12" height="1" fill="#ce9178" opacity="0.55"/><rect x="1783" y="92" width="1" height="1" fill="#d4d4d4"/><rect x="1783" y="93" width="1" height="1" fill="#d4d4d4" opacity="0.55"/><rect x="1753" y="94" width="5" height="1" fill="#ce9178"/><rect x="1753" y="95" width="5" height="1" fill="#ce9178" opacity="0.55"/><rect x="1759" y="94" width="3" height="1" fill="#ce9178"/><rect x="1759" y="95" width="3" height="1" fill="#ce9178" opacity="0.55"/><rect x="1763" y="94" width="6" height="1" fill="#ce9178"/><rect x="1763" y="95" width="6" height="1" fill="#ce9178" opacity="0.55"/><rect x="1769" y="94" width="1" height="1" fill="#d4d4d4"/><rect x="1769" y="95" width="1" height="1" fill="#d4d4d4" opacity="0.55"/><rect x="1753" y="96" width="5" height="1" fill="#ce9178"/><rect x="1753" y="97" width="5" height="1" fill="#ce9178" opacity="0.55"/><rect x="1759" y="96" width="3" height="1" fill="#ce9178"/><rect x="1759" y="97" width="3" height="1" fill="#ce9178" opacity="0.55"/><rect x="1763" y="96" width="10" height="1" fill="#ce9178"/><rect x="1763" y="97" width="10" height="1" fill="#ce9178" opacity="0.55"/><rect x="1773" y="96" width="1" height="1" fill="#d4d4d4"/><rect x="1773" y="97" width="1" height="1" fill="#d4d4d4" opacity="0.55"/><rect x="1753" y="98" width="4" height="1" fill="#ce9178"/><rect x="1753" y="99" width="4" height="1" fill="#ce9178" opacity="0.55"/><rect x="1758" y="98" width="1" height="1" fill="#ce9178"/><rect x="1758" y="99" width="1" height="1" fill="#ce9178" opacity="0.55"/><rect x="1760" y="98" width="11" height="1" fill="#ce9178"/><rect x="1760" y="99" width="11" height="1" fill="#ce9178" opacity="0.55"/><rect x="1771" y="98" width="1" height="1" fill="#d4d4d4"/><rect x="1771" y="99" width="1" height="1" fill="#d4d4d4" opacity="0.55"/><rect x="1753" y="100" width="4" height="1" fill="#ce9178"/><rect x="1753" y="101" width="4" height="1" fill="#ce9178" opacity="0.55"/><rect x="1758" y="100" width="1" height="1" fill="#ce9178"/><rect x="1758" y="101" width="1" height="1" fill="#ce9178" opacity="0.55"/><rect x="1760" y="100" width="5" height="1" fill="#ce9178"/><rect x="1760" y="101" width="5" height="1" fill="#ce9178" opacity="0.55"/><rect x="1765" y="100" width="1" height="1" fill="#d4d4d4"/><rect x="1765" y="101" width="1" height="1" fill="#d4d4d4" opacity="0.55"/><rect x="1753" y="102" width="4" height="1" fill="#ce9178"/><rect x="1753" y="103" width="4" height="1" fill="#ce9178" opacity="0.55"/><rect x="1758" y="102" width="2" height="1" fill="#ce9178"/><rect x="1758" y="103" width="2" height="1" fill="#ce9178" opacity="0.55"/><rect x="1761" y="102" width="9" height="1" fill="#ce9178"/><rect x="1761" y="103" width="9" height="1" fill="#ce9178" opacity="0.55"/><rect x="1770" y="102" width="1" height="1" fill="#d4d4d4"/><rect x="1770" y="103" width="1" height="1" fill="#d4d4d4" opacity="0.55"/><rect x="1753" y="104" width="7" height="1" fill="#ce9178"/><rect x="1753" y="105" width="7" height="1" fill="#ce9178" opacity="0.55"/><rect x="1761" y="104" width="2" height="1" fill="#ce9178"/><rect x="1761" y="105" width="2" height="1" fill="#ce9178" opacity="0.55"/><rect x="1764" y="104" width="8" height="1" fill="#ce9178"/><rect x="1764" y="105" width="8" height="1" fill="#ce9178" opacity="0.55"/><rect x="1773" y="104" width="5" height="1" fill="#ce9178"/><rect x="1773" y="105" width="5" height="1" fill="#ce9178" opacity="0.55"/><rect x="1778" y="104" width="1" height="1" fill="#d4d4d4"/><rect x="1778" y="105" width="1" height="1" fill="#d4d4d4" opacity="0.55"/><rect x="1753" y="106" width="2" height="1" fill="#6a9955"/><rect x="1753" y="107" width="2" height="1" fill="#6a9955" opacity="0.55"/><rect x="1756" y="106" width="7" height="1" fill="#6a9955"/><rect x="1756" y="107" width="7" height="1" fill="#6a9955" opacity="0.55"/><rect x="1764" y="106" width="8" height="1" fill="#6a9955"/><rect x="1764" y="107" width="8" height="1" fill="#6a9955" opacity="0.55"/><rect x="1773" y="106" width="10" height="1" fill="#6a9955"/><rect x="1773" y="107" width="10" height="1" fill="#6a9955" opacity="0.55"/><rect x="1753" y="108" width="2" height="1" fill="#6a9955"/><rect x="1753" y="109" width="2" height="1" fill="#6a9955" opacity="0.55"/><rect x="1756" y="108" width="5" height="1" fill="#6a9955"/><rect x="1756" y="109" width="5" height="1" fill="#6a9955" opacity="0.55"/><rect x="1762" y="108" width="9" height="1" fill="#6a9955"/><rect x="1762" y="109" width="9" height="1" fill="#6a9955" opacity="0.55"/><rect x="1772" y="108" width="2" height="1" fill="#6a9955"/><rect x="1772" y="109" width="2" height="1" fill="#6a9955" opacity="0.55"/><rect x="1775" y="108" width="9" height="1" fill="#6a9955"/><rect x="1775" y="109" width="9" height="1" fill="#6a9955" opacity="0.55"/><rect x="1753" y="110" width="2" height="1" fill="#6a9955"/><rect x="1753" y="111" width="2" height="1" fill="#6a9955" opacity="0.55"/><rect x="1756" y="110" width="5" height="1" fill="#6a9955"/><rect x="1756" y="111" width="5" height="1" fill="#6a9955" opacity="0.55"/><rect x="1762" y="110" width="9" height="1" fill="#6a9955"/><rect x="1762" y="111" width="9" height="1" fill="#6a9955" opacity="0.55"/><rect x="1772" y="110" width="2" height="1" fill="#6a9955"/><rect x="1772" y="111" width="2" height="1" fill="#6a9955" opacity="0.55"/><rect x="1775" y="110" width="12" height="1" fill="#6a9955"/><rect x="1775" y="111" width="12" height="1" fill="#6a9955" opacity="0.55"/><rect x="1753" y="112" width="2" height="1" fill="#6a9955"/><rect x="1753" y="113" width="2" height="1" fill="#6a9955" opacity="0.55"/><rect x="1756" y="112" width="7" height="1" fill="#6a9955"/><rect x="1756" y="113" width="7" height="1" fill="#6a9955" opacity="0.55"/><rect x="1764" y="112" width="13" height="1" fill="#6a9955"/><rect x="1764" y="113" width="13" height="1" fill="#6a9955" opacity="0.55"/><rect x="1753" y="114" width="2" height="1" fill="#6a9955"/><rect x="1753" y="115" width="2" height="1" fill="#6a9955" opacity="0.55"/><rect x="1756" y="114" width="7" height="1" fill="#6a9955"/><rect x="1756" y="115" width="7" height="1" fill="#6a9955" opacity="0.55"/><rect x="1764" y="114" width="7" height="1" fill="#6a9955"/><rect x="1764" y="115" width="7" height="1" fill="#6a9955" opacity="0.55"/><rect x="1753" y="116" width="2" height="1" fill="#6a9955"/><rect x="1753" y="117" width="2" height="1" fill="#6a9955" opacity="0.55"/><rect x="1756" y="116" width="7" height="1" fill="#6a9955"/><rect x="1756" y="117" width="7" height="1" fill="#6a9955" opacity="0.55"/><rect x="1764" y="116" width="11" height="1" fill="#6a9955"/><rect x="1764" y="117" width="11" height="1" fill="#6a9955" opacity="0.55"/><rect x="1753" y="118" width="2" height="1" fill="#6a9955"/><rect x="1753" y="119" width="2" height="1" fill="#6a9955" opacity="0.55"/><rect x="1756" y="118" width="5" height="1" fill="#6a9955"/><rect x="1756" y="119" width="5" height="1" fill="#6a9955" opacity="0.55"/><rect x="1762" y="118" width="5" height="1" fill="#6a9955"/><rect x="1762" y="119" width="5" height="1" fill="#6a9955" opacity="0.55"/><rect x="1768" y="118" width="8" height="1" fill="#6a9955"/><rect x="1768" y="119" width="8" height="1" fill="#6a9955" opacity="0.55"/><rect x="1777" y="118" width="8" height="1" fill="#6a9955"/><rect x="1777" y="119" width="8" height="1" fill="#6a9955" opacity="0.55"/><rect x="1753" y="120" width="6" height="1" fill="#ce9178"/><rect x="1753" y="121" width="6" height="1" fill="#ce9178" opacity="0.55"/><rect x="1759" y="120" width="1" height="1" fill="#d4d4d4"/><rect x="1759" y="121" width="1" height="1" fill="#d4d4d4" opacity="0.55"/><rect x="1749" y="122" width="1" height="1" fill="#d4d4d4"/><rect x="1749" y="123" width="1" height="1" fill="#d4d4d4" opacity="0.55"/><rect x="1747" y="124" width="1" height="1" fill="#d4d4d4"/><rect x="1747" y="125" width="1" height="1" fill="#d4d4d4" opacity="0.55"/><rect x="1748" y="124" width="1" height="1" fill="#d4d4d4"/><rect x="1748" y="125" width="1" height="1" fill="#d4d4d4" opacity="0.55"/><rect x="1749" y="126" width="1" height="1" fill="#d4d4d4"/><rect x="1749" y="127" width="1" height="1" fill="#d4d4d4" opacity="0.55"/><rect x="1750" y="126" width="4" height="1" fill="#dcdcaa"/><rect x="1750" y="127" width="4" height="1" fill="#dcdcaa" opacity="0.55"/><rect x="1754" y="126" width="1" height="1" fill="#d4d4d4"/><rect x="1754" y="127" width="1" height="1" fill="#d4d4d4" opacity="0.55"/><rect x="1755" y="126" width="1" height="1" fill="#d4d4d4"/><rect x="1755" y="127" width="1" height="1" fill="#d4d4d4" opacity="0.55"/><rect x="1756" y="126" width="7" height="1" fill="#9cdcfe"/><rect x="1756" y="127" width="7" height="1" fill="#9cdcfe" opacity="0.55"/><rect x="1763" y="126" width="1" height="1" fill="#d4d4d4"/><rect x="1763" y="127" width="1" height="1" fill="#d4d4d4" opacity="0.55"/><rect x="1765" y="126" width="1" height="1" fill="#d4d4d4"/><rect x="1765" y="127" width="1" height="1" fill="#d4d4d4" opacity="0.55"/><rect x="1766" y="126" width="1" height="1" fill="#d4d4d4"/><rect x="1766" y="127" width="1" height="1" fill="#d4d4d4" opacity="0.55"/><rect x="1768" y="126" width="1" height="1" fill="#d4d4d4"/><rect x="1768" y="127" width="1" height="1" fill="#d4d4d4" opacity="0.55"/><rect x="1751" y="128" width="6" height="1" fill="#c586c0"/><rect x="1751" y="129" width="6" height="1" fill="#c586c0" opacity="0.55"/><rect x="1758" y="128" width="1" height="1" fill="#d4d4d4"/><rect x="1758" y="129" width="1" height="1" fill="#d4d4d4" opacity="0.55"/><rect x="1759" y="128" width="7" height="1" fill="#9cdcfe"/><rect x="1759" y="129" width="7" height="1" fill="#9cdcfe" opacity="0.55"/><rect x="1766" y="128" width="1" height="1" fill="#d4d4d4"/><rect x="1766" y="129" width="1" height="1" fill="#d4d4d4" opacity="0.55"/><rect x="1767" y="128" width="6" height="1" fill="#9cdcfe"/><rect x="1767" y="129" width="6" height="1" fill="#9cdcfe" opacity="0.55"/><rect x="1773" y="128" width="1" height="1" fill="#d4d4d4"/><rect x="1773" y="129" width="1" height="1" fill="#d4d4d4" opacity="0.55"/><rect x="1775" y="128" width="1" height="1" fill="#d4d4d4"/><rect x="1775" y="129" width="1" height="1" fill="#d4d4d4" opacity="0.55"/><rect x="1753" y="132" width="4" height="1" fill="#c586c0"/><rect x="1753" y="133" width="4" height="1" fill="#c586c0" opacity="0.55"/><rect x="1758" y="132" width="5" height="1" fill="#ce9178"/><rect x="1758" y="133" width="5" height="1" fill="#ce9178" opacity="0.55"/><rect x="1764" y="132" width="3" height="1" fill="#ce9178"/><rect x="1764" y="133" width="3" height="1" fill="#ce9178" opacity="0.55"/><rect x="1768" y="132" width="12" height="1" fill="#ce9178"/><rect x="1768" y="133" width="12" height="1" fill="#ce9178" opacity="0.55"/><rect x="1780" y="132" width="1" height="1" fill="#d4d4d4"/><rect x="1780" y="133" width="1" height="1" fill="#d4d4d4" opacity="0.55"/><rect x="1755" y="134" width="15" height="1" fill="#dcdcaa"/><rect x="1755" y="135" width="15" height="1" fill="#dcdcaa" opacity="0.55"/><rect x="1770" y="134" width="1" height="1" fill="#d4d4d4"/><rect x="1770" y="135" width="1" height="1" fill="#d4d4d4" opacity="0.55"/><rect x="1771" y="134" width="1" height="1" fill="#d4d4d4"/><rect x="1771" y="135" width="1" height="1" fill="#d4d4d4" opacity="0.55"/><rect x="1772" y="134" width="1" height="1" fill="#d4d4d4"/><rect x="1772" y="135" width="1" height="1" fill="#d4d4d4" opacity="0.55"/><rect x="1755" y="136" width="5" height="1" fill="#c586c0"/><rect x="1755" y="137" width="5" height="1" fill="#c586c0" opacity="0.55"/><rect x="1760" y="136" width="1" height="1" fill="#d4d4d4"/><rect x="1760" y="137" width="1" height="1" fill="#d4d4d4" opacity="0.55"/><rect x="1753" y="140" width="4" height="1" fill="#c586c0"/><rect x="1753" y="141" width="4" height="1" fill="#c586c0" opacity="0.55"/><rect x="1758" y="140" width="5" height="1" fill="#ce9178"/><rect x="1758" y="141" width="5" height="1" fill="#ce9178" opacity="0.55"/><rect x="1764" y="140" width="3" height="1" fill="#ce9178"/><rect x="1764" y="141" width="3" height="1" fill="#ce9178" opacity="0.55"/><rect x="1768" y="140" width="6" height="1" fill="#ce9178"/><rect x="1768" y="141" width="6" height="1" fill="#ce9178" opacity="0.55"/><rect x="1774" y="140" width="1" height="1" fill="#d4d4d4"/><rect x="1774" y="141" width="1" height="1" fill="#d4d4d4" opacity="0.55"/><rect x="1755" y="142" width="9" height="1" fill="#dcdcaa"/><rect x="1755" y="143" width="9" height="1" fill="#dcdcaa" opacity="0.55"/><rect x="1764" y="142" width="1" height="1" fill="#d4d4d4"/><rect x="1764" y="143" width="1" height="1" fill="#d4d4d4" opacity="0.55"/><rect x="1765" y="142" width="1" height="1" fill="#d4d4d4"/><rect x="1765" y="143" width="1" height="1" fill="#d4d4d4" opacity="0.55"/><rect x="1766" y="142" width="1" height="1" fill="#d4d4d4"/><rect x="1766" y="143" width="1" height="1" fill="#d4d4d4" opacity="0.55"/><rect x="1755" y="144" width="5" height="1" fill="#c586c0"/><rect x="1755" y="145" width="5" height="1" fill="#c586c0" opacity="0.55"/><rect x="1760" y="144" width="1" height="1" fill="#d4d4d4"/><rect x="1760" y="145" width="1" height="1" fill="#d4d4d4" opacity="0.55"/><rect x="1753" y="148" width="4" height="1" fill="#c586c0"/><rect x="1753" y="149" width="4" height="1" fill="#c586c0" opacity="0.55"/><rect x="1758" y="148" width="5" height="1" fill="#ce9178"/><rect x="1758" y="149" width="5" height="1" fill="#ce9178" opacity="0.55"/><rect x="1764" y="148" width="3" height="1" fill="#ce9178"/><rect x="1764" y="149" width="3" height="1" fill="#ce9178" opacity="0.55"/><rect x="1768" y="148" width="10" height="1" fill="#ce9178"/><rect x="1768" y="149" width="10" height="1" fill="#ce9178" opacity="0.55"/><rect x="1778" y="148" width="1" height="1" fill="#d4d4d4"/><rect x="1778" y="149" width="1" height="1" fill="#d4d4d4" opacity="0.55"/><rect x="1755" y="150" width="13" height="1" fill="#dcdcaa"/><rect x="1755" y="151" width="13" height="1" fill="#dcdcaa" opacity="0.55"/><rect x="1768" y="150" width="1" height="1" fill="#d4d4d4"/><rect x="1768" y="151" width="1" height="1" fill="#d4d4d4" opacity="0.55"/><rect x="1769" y="150" width="1" height="1" fill="#d4d4d4"/><rect x="1769" y="151" width="1" height="1" fill="#d4d4d4" opacity="0.55"/><rect x="1770" y="150" width="1" height="1" fill="#d4d4d4"/><rect x="1770" y="151" width="1" height="1" fill="#d4d4d4" opacity="0.55"/><rect x="1755" y="152" width="5" height="1" fill="#c586c0"/><rect x="1755" y="153" width="5" height="1" fill="#c586c0" opacity="0.55"/><rect x="1760" y="152" width="1" height="1" fill="#d4d4d4"/><rect x="1760" y="153" width="1" height="1" fill="#d4d4d4" opacity="0.55"/><rect x="1753" y="156" width="4" height="1" fill="#c586c0"/><rect x="1753" y="157" width="4" height="1" fill="#c586c0" opacity="0.55"/><rect x="1758" y="156" width="4" height="1" fill="#ce9178"/><rect x="1758" y="157" width="4" height="1" fill="#ce9178" opacity="0.55"/><rect x="1763" y="156" width="1" height="1" fill="#ce9178"/><rect x="1763" y="157" width="1" height="1" fill="#ce9178" opacity="0.55"/><rect x="1765" y="156" width="11" height="1" fill="#ce9178"/><rect x="1765" y="157" width="11" height="1" fill="#ce9178" opacity="0.55"/><rect x="1776" y="156" width="1" height="1" fill="#d4d4d4"/><rect x="1776" y="157" width="1" height="1" fill="#d4d4d4" opacity="0.55"/><rect x="1755" y="158" width="13" height="1" fill="#dcdcaa"/><rect x="1755" y="159" width="13" height="1" fill="#dcdcaa" opacity="0.55"/><rect x="1768" y="158" width="1" height="1" fill="#d4d4d4"/><rect x="1768" y="159" width="1" height="1" fill="#d4d4d4" opacity="0.55"/><rect x="1769" y="158" width="1" height="1" fill="#d4d4d4"/><rect x="1769" y="159" width="1" height="1" fill="#d4d4d4" opacity="0.55"/><rect x="1770" y="158" width="1" height="1" fill="#d4d4d4"/><rect x="1770" y="159" width="1" height="1" fill="#d4d4d4" opacity="0.55"/><rect x="1755" y="160" width="5" height="1" fill="#c586c0"/><rect x="1755" y="161" width="5" height="1" fill="#c586c0" opacity="0.55"/><rect x="1760" y="160" width="1" height="1" fill="#d4d4d4"/><rect x="1760" y="161" width="1" height="1" fill="#d4d4d4" opacity="0.55"/><rect x="1753" y="164" width="4" height="1" fill="#c586c0"/><rect x="1753" y="165" width="4" height="1" fill="#c586c0" opacity="0.55"/><rect x="1758" y="164" width="4" height="1" fill="#ce9178"/><rect x="1758" y="165" width="4" height="1" fill="#ce9178" opacity="0.55"/><rect x="1763" y="164" width="1" height="1" fill="#ce9178"/><rect x="1763" y="165" width="1" height="1" fill="#ce9178" opacity="0.55"/><rect x="1765" y="164" width="5" height="1" fill="#ce9178"/><rect x="1765" y="165" width="5" height="1" fill="#ce9178" opacity="0.55"/><rect x="1770" y="164" width="1" height="1" fill="#d4d4d4"/><rect x="1770" y="165" width="1" height="1" fill="#d4d4d4" opacity="0.55"/><rect x="1755" y="166" width="7" height="1" fill="#dcdcaa"/><rect x="1755" y="167" width="7" height="1" fill="#dcdcaa" opacity="0.55"/><rect x="1762" y="166" width="1" height="1" fill="#d4d4d4"/><rect x="1762" y="167" width="1" height="1" fill="#d4d4d4" opacity="0.55"/><rect x="1763" y="166" width="1" height="1" fill="#d4d4d4"/><rect x="1763" y="167" width="1" height="1" fill="#d4d4d4" opacity="0.55"/><rect x="1764" y="166" width="1" height="1" fill="#d4d4d4"/><rect x="1764" y="167" width="1" height="1" fill="#d4d4d4" opacity="0.55"/><rect x="1755" y="168" width="5" height="1" fill="#c586c0"/><rect x="1755" y="169" width="5" height="1" fill="#c586c0" opacity="0.55"/><rect x="1760" y="168" width="1" height="1" fill="#d4d4d4"/><rect x="1760" y="169" width="1" height="1" fill="#d4d4d4" opacity="0.55"/><rect x="1753" y="172" width="4" height="1" fill="#c586c0"/><rect x="1753" y="173" width="4" height="1" fill="#c586c0" opacity="0.55"/><rect x="1758" y="172" width="4" height="1" fill="#ce9178"/><rect x="1758" y="173" width="4" height="1" fill="#ce9178" opacity="0.55"/><rect x="1763" y="172" width="2" height="1" fill="#ce9178"/><rect x="1763" y="173" width="2" height="1" fill="#ce9178" opacity="0.55"/><rect x="1766" y="172" width="9" height="1" fill="#ce9178"/><rect x="1766" y="173" width="9" height="1" fill="#ce9178" opacity="0.55"/><rect x="1775" y="172" width="1" height="1" fill="#d4d4d4"/><rect x="1775" y="173" width="1" height="1" fill="#d4d4d4" opacity="0.55"/><rect x="1755" y="174" width="11" height="1" fill="#dcdcaa"/><rect x="1755" y="175" width="11" height="1" fill="#dcdcaa" opacity="0.55"/><rect x="1766" y="174" width="1" height="1" fill="#d4d4d4"/><rect x="1766" y="175" width="1" height="1" fill="#d4d4d4" opacity="0.55"/><rect x="1767" y="174" width="1" height="1" fill="#d4d4d4"/><rect x="1767" y="175" width="1" height="1" fill="#d4d4d4" opacity="0.55"/><rect x="1768" y="174" width="1" height="1" fill="#d4d4d4"/><rect x="1768" y="175" width="1" height="1" fill="#d4d4d4" opacity="0.55"/><rect x="1755" y="176" width="5" height="1" fill="#c586c0"/><rect x="1755" y="177" width="5" height="1" fill="#c586c0" opacity="0.55"/><rect x="1760" y="176" width="1" height="1" fill="#d4d4d4"/><rect x="1760" y="177" width="1" height="1" fill="#d4d4d4" opacity="0.55"/><rect x="1753" y="180" width="4" height="1" fill="#c586c0"/><rect x="1753" y="181" width="4" height="1" fill="#c586c0" opacity="0.55"/><rect x="1758" y="180" width="7" height="1" fill="#ce9178"/><rect x="1758" y="181" width="7" height="1" fill="#ce9178" opacity="0.55"/><rect x="1766" y="180" width="2" height="1" fill="#ce9178"/><rect x="1766" y="181" width="2" height="1" fill="#ce9178" opacity="0.55"/><rect x="1769" y="180" width="8" height="1" fill="#ce9178"/><rect x="1769" y="181" width="8" height="1" fill="#ce9178" opacity="0.55"/><rect x="1778" y="180" width="5" height="1" fill="#ce9178"/><rect x="1778" y="181" width="5" height="1" fill="#ce9178" opacity="0.55"/><rect x="1783" y="180" width="1" height="1" fill="#d4d4d4"/><rect x="1783" y="181" width="1" height="1" fill="#d4d4d4" opacity="0.55"/><rect x="1755" y="182" width="18" height="1" fill="#dcdcaa"/><rect x="1755" y="183" width="18" height="1" fill="#dcdcaa" opacity="0.55"/><rect x="1773" y="182" width="1" height="1" fill="#d4d4d4"/><rect x="1773" y="183" width="1" height="1" fill="#d4d4d4" opacity="0.55"/><rect x="1774" y="182" width="1" height="1" fill="#d4d4d4"/><rect x="1774" y="183" width="1" height="1" fill="#d4d4d4" opacity="0.55"/><rect x="1775" y="182" width="1" height="1" fill="#d4d4d4"/><rect x="1775" y="183" width="1" height="1" fill="#d4d4d4" opacity="0.55"/><rect x="1755" y="184" width="5" height="1" fill="#c586c0"/><rect x="1755" y="185" width="5" height="1" fill="#c586c0" opacity="0.55"/><rect x="1760" y="184" width="1" height="1" fill="#d4d4d4"/><rect x="1760" y="185" width="1" height="1" fill="#d4d4d4" opacity="0.55"/><rect x="1753" y="186" width="2" height="1" fill="#6a9955"/><rect x="1753" y="187" width="2" height="1" fill="#6a9955" opacity="0.55"/><rect x="1753" y="188" width="2" height="1" fill="#6a9955"/><rect x="1753" y="189" width="2" height="1" fill="#6a9955" opacity="0.55"/><rect x="1758" y="188" width="4" height="1" fill="#6a9955"/><rect x="1758" y="189" width="4" height="1" fill="#6a9955" opacity="0.55"/><rect x="1763" y="188" width="7" height="1" fill="#6a9955"/><rect x="1763" y="189" width="7" height="1" fill="#6a9955" opacity="0.55"/><rect x="1771" y="188" width="8" height="1" fill="#6a9955"/><rect x="1771" y="189" width="8" height="1" fill="#6a9955" opacity="0.55"/><rect x="1780" y="188" width="10" height="1" fill="#6a9955"/><rect x="1780" y="189" width="10" height="1" fill="#6a9955" opacity="0.55"/><rect x="1753" y="190" width="2" height="1" fill="#6a9955"/><rect x="1753" y="191" width="2" height="1" fill="#6a9955" opacity="0.55"/><rect x="1760" y="190" width="24" height="1" fill="#6a9955"/><rect x="1760" y="191" width="24" height="1" fill="#6a9955" opacity="0.55"/><rect x="1753" y="192" width="2" height="1" fill="#6a9955"/><rect x="1753" y="193" width="2" height="1" fill="#6a9955" opacity="0.55"/><rect x="1760" y="192" width="6" height="1" fill="#6a9955"/><rect x="1760" y="193" width="6" height="1" fill="#6a9955" opacity="0.55"/><rect x="1753" y="194" width="2" height="1" fill="#6a9955"/><rect x="1753" y="195" width="2" height="1" fill="#6a9955" opacity="0.55"/><rect x="1753" y="196" width="2" height="1" fill="#6a9955"/><rect x="1753" y="197" width="2" height="1" fill="#6a9955" opacity="0.55"/><rect x="1758" y="196" width="4" height="1" fill="#6a9955"/><rect x="1758" y="197" width="4" height="1" fill="#6a9955" opacity="0.55"/><rect x="1763" y="196" width="5" height="1" fill="#6a9955"/><rect x="1763" y="197" width="5" height="1" fill="#6a9955" opacity="0.55"/><rect x="1769" y="196" width="9" height="1" fill="#6a9955"/><rect x="1769" y="197" width="9" height="1" fill="#6a9955" opacity="0.55"/><rect x="1779" y="196" width="2" height="1" fill="#6a9955"/><rect x="1779" y="197" width="2" height="1" fill="#6a9955" opacity="0.55"/><rect x="1782" y="196" width="9" height="1" fill="#6a9955"/><rect x="1782" y="197" width="9" height="1" fill="#6a9955" opacity="0.55"/><rect x="1753" y="198" width="2" height="1" fill="#6a9955"/><rect x="1753" y="199" width="2" height="1" fill="#6a9955" opacity="0.55"/><rect x="1760" y="198" width="25" height="1" fill="#6a9955"/><rect x="1760" y="199" width="25" height="1" fill="#6a9955" opacity="0.55"/><rect x="1753" y="200" width="2" height="1" fill="#6a9955"/><rect x="1753" y="201" width="2" height="1" fill="#6a9955" opacity="0.55"/><rect x="1760" y="200" width="6" height="1" fill="#6a9955"/><rect x="1760" y="201" width="6" height="1" fill="#6a9955" opacity="0.55"/><rect x="1753" y="202" width="2" height="1" fill="#6a9955"/><rect x="1753" y="203" width="2" height="1" fill="#6a9955" opacity="0.55"/><rect x="1753" y="204" width="2" height="1" fill="#6a9955"/><rect x="1753" y="205" width="2" height="1" fill="#6a9955" opacity="0.55"/><rect x="1758" y="204" width="4" height="1" fill="#6a9955"/><rect x="1758" y="205" width="4" height="1" fill="#6a9955" opacity="0.55"/><rect x="1763" y="204" width="5" height="1" fill="#6a9955"/><rect x="1763" y="205" width="5" height="1" fill="#6a9955" opacity="0.55"/><rect x="1769" y="204" width="9" height="1" fill="#6a9955"/><rect x="1769" y="205" width="9" height="1" fill="#6a9955" opacity="0.55"/><rect x="1779" y="204" width="2" height="1" fill="#6a9955"/><rect x="1779" y="205" width="2" height="1" fill="#6a9955" opacity="0.55"/><rect x="1782" y="204" width="12" height="1" fill="#6a9955"/><rect x="1782" y="205" width="12" height="1" fill="#6a9955" opacity="0.55"/><rect x="1753" y="206" width="2" height="1" fill="#6a9955"/><rect x="1753" y="207" width="2" height="1" fill="#6a9955" opacity="0.55"/><rect x="1760" y="206" width="28" height="1" fill="#6a9955"/><rect x="1760" y="207" width="28" height="1" fill="#6a9955" opacity="0.55"/><rect x="1753" y="208" width="2" height="1" fill="#6a9955"/><rect x="1753" y="209" width="2" height="1" fill="#6a9955" opacity="0.55"/><rect x="1760" y="208" width="6" height="1" fill="#6a9955"/><rect x="1760" y="209" width="6" height="1" fill="#6a9955" opacity="0.55"/><rect x="1753" y="210" width="2" height="1" fill="#6a9955"/><rect x="1753" y="211" width="2" height="1" fill="#6a9955" opacity="0.55"/><rect x="1753" y="212" width="2" height="1" fill="#6a9955"/><rect x="1753" y="213" width="2" height="1" fill="#6a9955" opacity="0.55"/><rect x="1758" y="212" width="4" height="1" fill="#6a9955"/><rect x="1758" y="213" width="4" height="1" fill="#6a9955" opacity="0.55"/><rect x="1763" y="212" width="7" height="1" fill="#6a9955"/><rect x="1763" y="213" width="7" height="1" fill="#6a9955" opacity="0.55"/><rect x="1771" y="212" width="13" height="1" fill="#6a9955"/><rect x="1771" y="213" width="13" height="1" fill="#6a9955" opacity="0.55"/><rect x="1753" y="214" width="2" height="1" fill="#6a9955"/><rect x="1753" y="215" width="2" height="1" fill="#6a9955" opacity="0.55"/><rect x="1760" y="214" width="20" height="1" fill="#6a9955"/><rect x="1760" y="215" width="20" height="1" fill="#6a9955" opacity="0.55"/><rect x="1753" y="216" width="2" height="1" fill="#6a9955"/><rect x="1753" y="217" width="2" height="1" fill="#6a9955" opacity="0.55"/><rect x="1760" y="216" width="6" height="1" fill="#6a9955"/><rect x="1760" y="217" width="6" height="1" fill="#6a9955" opacity="0.55"/><rect x="1753" y="218" width="2" height="1" fill="#6a9955"/><rect x="1753" y="219" width="2" height="1" fill="#6a9955" opacity="0.55"/><rect x="1753" y="220" width="2" height="1" fill="#6a9955"/><rect x="1753" y="221" width="2" height="1" fill="#6a9955" opacity="0.55"/><rect x="1758" y="220" width="4" height="1" fill="#6a9955"/><rect x="1758" y="221" width="4" height="1" fill="#6a9955" opacity="0.55"/><rect x="1763" y="220" width="7" height="1" fill="#6a9955"/><rect x="1763" y="221" width="7" height="1" fill="#6a9955" opacity="0.55"/><rect x="1771" y="220" width="7" height="1" fill="#6a9955"/><rect x="1771" y="221" width="7" height="1" fill="#6a9955" opacity="0.55"/><rect x="1753" y="222" width="2" height="1" fill="#6a9955"/><rect x="1753" y="223" width="2" height="1" fill="#6a9955" opacity="0.55"/><rect x="1760" y="222" width="14" height="1" fill="#6a9955"/><rect x="1760" y="223" width="14" height="1" fill="#6a9955" opacity="0.55"/><rect x="1753" y="224" width="2" height="1" fill="#6a9955"/><rect x="1753" y="225" width="2" height="1" fill="#6a9955" opacity="0.55"/><rect x="1760" y="224" width="6" height="1" fill="#6a9955"/><rect x="1760" y="225" width="6" height="1" fill="#6a9955" opacity="0.55"/><rect x="1753" y="226" width="2" height="1" fill="#6a9955"/><rect x="1753" y="227" width="2" height="1" fill="#6a9955" opacity="0.55"/><rect x="1753" y="228" width="2" height="1" fill="#6a9955"/><rect x="1753" y="229" width="2" height="1" fill="#6a9955" opacity="0.55"/><rect x="1758" y="228" width="4" height="1" fill="#6a9955"/><rect x="1758" y="229" width="4" height="1" fill="#6a9955" opacity="0.55"/><rect x="1763" y="228" width="7" height="1" fill="#6a9955"/><rect x="1763" y="229" width="7" height="1" fill="#6a9955" opacity="0.55"/><rect x="1771" y="228" width="11" height="1" fill="#6a9955"/><rect x="1771" y="229" width="11" height="1" fill="#6a9955" opacity="0.55"/><rect x="1753" y="230" width="2" height="1" fill="#6a9955"/><rect x="1753" y="231" width="2" height="1" fill="#6a9955" opacity="0.55"/><rect x="1760" y="230" width="18" height="1" fill="#6a9955"/><rect x="1760" y="231" width="18" height="1" fill="#6a9955" opacity="0.55"/><rect x="1753" y="232" width="2" height="1" fill="#6a9955"/><rect x="1753" y="233" width="2" height="1" fill="#6a9955" opacity="0.55"/><rect x="1760" y="232" width="6" height="1" fill="#6a9955"/><rect x="1760" y="233" width="6" height="1" fill="#6a9955" opacity="0.55"/><rect x="1753" y="234" width="2" height="1" fill="#6a9955"/><rect x="1753" y="235" width="2" height="1" fill="#6a9955" opacity="0.55"/><rect x="1753" y="236" width="2" height="1" fill="#6a9955"/><rect x="1753" y="237" width="2" height="1" fill="#6a9955" opacity="0.55"/><rect x="1758" y="236" width="4" height="1" fill="#6a9955"/><rect x="1758" y="237" width="4" height="1" fill="#6a9955" opacity="0.55"/><rect x="1763" y="236" width="5" height="1" fill="#6a9955"/><rect x="1763" y="237" width="5" height="1" fill="#6a9955" opacity="0.55"/><rect x="1769" y="236" width="5" height="1" fill="#6a9955"/><rect x="1769" y="237" width="5" height="1" fill="#6a9955" opacity="0.55"/><rect x="1775" y="236" width="8" height="1" fill="#6a9955"/><rect x="1775" y="237" width="8" height="1" fill="#6a9955" opacity="0.55"/><rect x="1784" y="236" width="8" height="1" fill="#6a9955"/><rect x="1784" y="237" width="8" height="1" fill="#6a9955" opacity="0.55"/><rect x="1753" y="238" width="2" height="1" fill="#6a9955"/><rect x="1753" y="239" width="2" height="1" fill="#6a9955" opacity="0.55"/><rect x="1760" y="238" width="18" height="1" fill="#6a9955"/><rect x="1760" y="239" width="18" height="1" fill="#6a9955" opacity="0.55"/><rect x="1753" y="240" width="2" height="1" fill="#6a9955"/><rect x="1753" y="241" width="2" height="1" fill="#6a9955" opacity="0.55"/><rect x="1760" y="240" width="6" height="1" fill="#6a9955"/><rect x="1760" y="241" width="6" height="1" fill="#6a9955" opacity="0.55"/><rect x="1753" y="244" width="7" height="1" fill="#c586c0"/><rect x="1753" y="245" width="7" height="1" fill="#c586c0" opacity="0.55"/><rect x="1760" y="244" width="1" height="1" fill="#d4d4d4"/><rect x="1760" y="245" width="1" height="1" fill="#d4d4d4" opacity="0.55"/><rect x="1755" y="246" width="2" height="1" fill="#4fc1ff"/><rect x="1755" y="247" width="2" height="1" fill="#4fc1ff" opacity="0.55"/><rect x="1757" y="246" width="1" height="1" fill="#d4d4d4"/><rect x="1757" y="247" width="1" height="1" fill="#d4d4d4" opacity="0.55"/><rect x="1758" y="246" width="3" height="1" fill="#dcdcaa"/><rect x="1758" y="247" width="3" height="1" fill="#dcdcaa" opacity="0.55"/><rect x="1761" y="246" width="1" height="1" fill="#d4d4d4"/><rect x="1761" y="247" width="1" height="1" fill="#d4d4d4" opacity="0.55"/><rect x="1762" y="246" width="1" height="1" fill="#d4d4d4"/><rect x="1762" y="247" width="1" height="1" fill="#d4d4d4" opacity="0.55"/><rect x="1763" y="246" width="1" height="1" fill="#d4d4d4"/><rect x="1763" y="247" width="1" height="1" fill="#d4d4d4" opacity="0.55"/><rect x="1751" y="248" width="1" height="1" fill="#d4d4d4"/><rect x="1751" y="249" width="1" height="1" fill="#d4d4d4" opacity="0.55"/><rect x="1749" y="250" width="1" height="1" fill="#d4d4d4"/><rect x="1749" y="251" width="1" height="1" fill="#d4d4d4" opacity="0.55"/><rect x="1750" y="250" width="1" height="1" fill="#d4d4d4"/><rect x="1750" y="251" width="1" height="1" fill="#d4d4d4" opacity="0.55"/><rect x="1751" y="250" width="1" height="1" fill="#d4d4d4"/><rect x="1751" y="251" width="1" height="1" fill="#d4d4d4" opacity="0.55"/><rect x="1745" y="252" width="1" height="1" fill="#d4d4d4"/><rect x="1745" y="253" width="1" height="1" fill="#d4d4d4" opacity="0.55"/></g></svg>
</body></html>
